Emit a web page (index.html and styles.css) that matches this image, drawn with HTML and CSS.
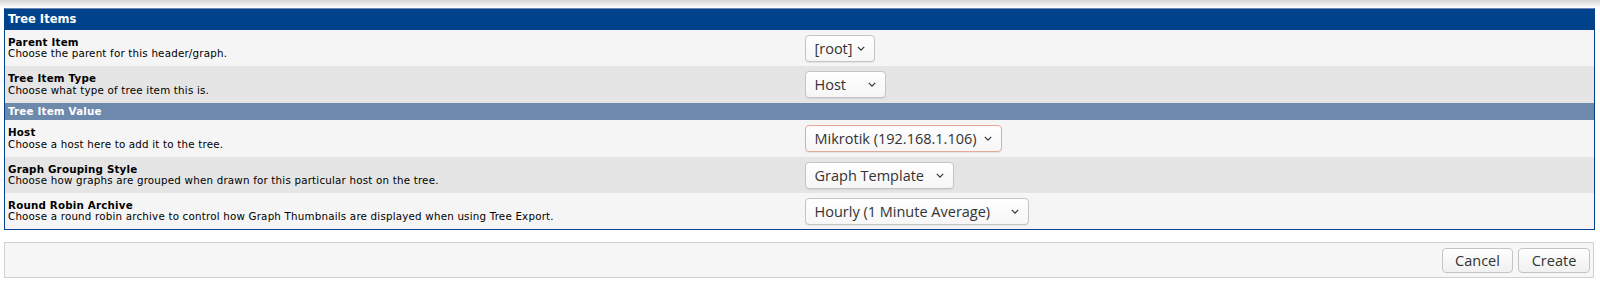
FILE: index.html
```html
<!DOCTYPE html>
<html>
<head>
<meta charset="utf-8">
<link rel="stylesheet" href="styles.css">
</head>
<body>
<div class="topbar"></div>
<div class="page">
  <div class="panel">
    <div class="panel-head">Tree Items</div>
    <div class="row odd h36">
      <div class="label"><b>Parent Item</b><span>Choose the parent for this header/graph.</span></div>
      <div class="field"><div class="select w-root"><span>[root]</span><svg viewBox="0 0 10 6" class="chev"><path d="M1 1l4 4 4-4"/></svg></div></div>
    </div>
    <div class="row even h37">
      <div class="label"><b>Tree Item Type</b><span>Choose what type of tree item this is.</span></div>
      <div class="field"><div class="select w-host"><span>Host</span><svg viewBox="0 0 10 6" class="chev"><path d="M1 1l4 4 4-4"/></svg></div></div>
    </div>
    <div class="sub-head">Tree Item Value</div>
    <div class="row odd h37">
      <div class="label"><b>Host</b><span>Choose a host here to add it to the tree.</span></div>
      <div class="field"><div class="select w-mk focus"><span>Mikrotik (192.168.1.106)</span><svg viewBox="0 0 10 6" class="chev"><path d="M1 1l4 4 4-4"/></svg></div></div>
    </div>
    <div class="row even h36">
      <div class="label"><b>Graph Grouping Style</b><span>Choose how graphs are grouped when drawn for this particular host on the tree.</span></div>
      <div class="field"><div class="select w-gt"><span>Graph Template</span><svg viewBox="0 0 10 6" class="chev"><path d="M1 1l4 4 4-4"/></svg></div></div>
    </div>
    <div class="row odd h36">
      <div class="label"><b>Round Robin Archive</b><span>Choose a round robin archive to control how Graph Thumbnails are displayed when using Tree Export.</span></div>
      <div class="field"><div class="select w-hr"><span>Hourly (1 Minute Average)</span><svg viewBox="0 0 10 6" class="chev"><path d="M1 1l4 4 4-4"/></svg></div></div>
    </div>
  </div>
  <div class="actions">
    <button class="btn w-cancel">Cancel</button>
    <button class="btn w-create">Create</button>
  </div>
</div>
</body>
</html>
```

FILE: styles.css
```css
html, body {
  margin: 0;
  padding: 0;
  background: #ffffff;
}
body {
  font-family: "DejaVu Sans", Verdana, sans-serif;
  color: #000;
}
.topbar {
  height: 8px;
  background: linear-gradient(#d6d6d6, #eeeeee 60%, #ffffff);
}
.page {
  width: 1591px;
  margin-left: 4px;
}
.panel {
  border: 1px solid #00438c;
  border-top-color: #6a86b4;
  background: #f5f5f5;
}
.panel-head {
  background: #00438c;
  color: #fff;
  font-weight: bold;
  font-size: 11.5px;
  height: 21px;
  line-height: 21px;
  padding-left: 3px;
}
.sub-head {
  background: #6d89ab;
  color: #fff;
  font-weight: bold;
  font-size: 10.3px;
  letter-spacing: 0.2px;
  height: 17px;
  line-height: 17px;
  padding-left: 3px;
}
.row {
  display: grid;
  grid-template-columns: 50% 50%;
  align-items: center;
}
.h36 { height: 36px; }
.h37 { height: 37px; }
.row.odd { background: #f5f5f5; }
.row.even { background: #e5e5e5; }
.label {
  padding-left: 3px;
  font-size: 10.3px;
  letter-spacing: 0.2px;
  line-height: 11.5px;
  display: flex;
  flex-direction: column;
  color: #000;
}
.label b { font-weight: bold; }
.field {
  padding-left: 5px;
  display: flex;
}
.select {
  box-sizing: border-box;
  height: 27px;
  border: 1px solid #c4c4c4;
  border-radius: 4px;
  background: linear-gradient(#ffffff, #f6f6f6);
  box-shadow: 0 1px 1px rgba(0,0,0,0.07);
  display: flex;
  align-items: center;
  justify-content: space-between;
  padding: 0 9px 0 9px;
  font-family: "Open Sans", "Noto Sans", sans-serif;
  font-size: 14.5px;
  color: #333;
}
.select.focus { border-color: #e6a898; }
.chev {
  width: 8px;
  height: 5px;
  fill: none;
  stroke: #333;
  stroke-width: 1.5;
  flex: none;
}
.w-root { width: 70px; }
.w-host { width: 81px; }
.w-mk { width: 197px; }
.w-gt { width: 149px; }
.w-hr { width: 224px; }
.actions {
  margin-top: 12px;
  box-sizing: border-box;
  height: 36px;
  width: 1590px;
  border: 1px solid #d0d0d0;
  background: #f7f7f7;
  display: flex;
  justify-content: flex-end;
  align-items: center;
  gap: 5px;
  padding-right: 3px;
}
.btn {
  box-sizing: border-box;
  height: 25px;
  padding: 0;
  border: 1px solid #c4c4c4;
  border-radius: 4px;
  background: linear-gradient(#ffffff, #f0f0f0);
  font-family: "Open Sans", "Noto Sans", sans-serif;
  font-size: 14.5px;
  color: #333;
}
.w-cancel { width: 71px; }
.w-create { width: 72px; }
```
